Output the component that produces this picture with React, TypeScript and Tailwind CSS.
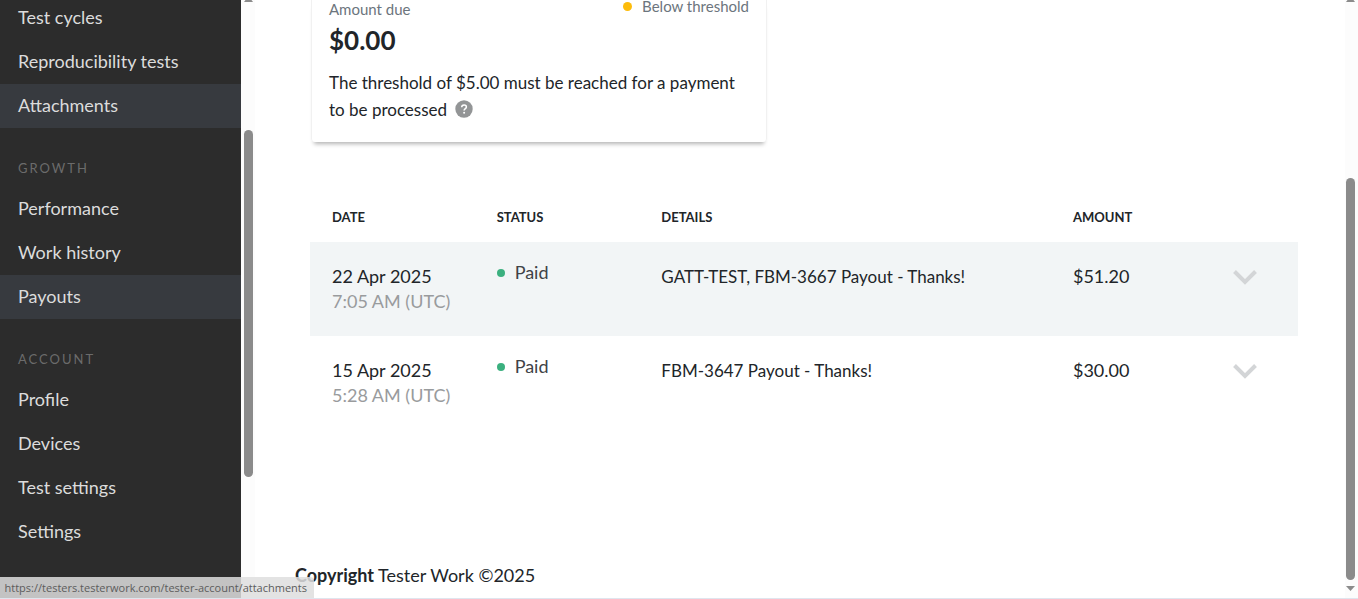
import React, { useState } from 'react';
import clsx from 'clsx';

interface NavItem {
  label: string;
  href: string;
  highlighted?: boolean;
}

interface NavGroup {
  title?: string;
  items: NavItem[];
}

interface Payout {
  id: string;
  date: string;
  time: string;
  status: string;
  details: string;
  amount: string;
}

const navGroups: NavGroup[] = [
  {
    items: [
      { label: 'Test cycles', href: '#test-cycles' },
      { label: 'Reproducibility tests', href: '#reproducibility-tests' },
      { label: 'Attachments', href: '#attachments', highlighted: true },
    ],
  },
  {
    title: 'Growth',
    items: [
      { label: 'Performance', href: '#performance' },
      { label: 'Work history', href: '#work-history' },
      { label: 'Payouts', href: '#payouts', highlighted: true },
    ],
  },
  {
    title: 'Account',
    items: [
      { label: 'Profile', href: '#profile' },
      { label: 'Devices', href: '#devices' },
      { label: 'Test settings', href: '#test-settings' },
      { label: 'Settings', href: '#settings' },
    ],
  },
];

const payouts: Payout[] = [
  { id: 'p1', date: '22 Apr 2025', time: '7:05 AM (UTC)', status: 'Paid', details: 'GATT-TEST, FBM-3667 Payout - Thanks!', amount: '$51.20' },
  { id: 'p2', date: '15 Apr 2025', time: '5:28 AM (UTC)', status: 'Paid', details: 'FBM-3647 Payout - Thanks!', amount: '$30.00' },
];

const Sidebar: React.FC = () => (
  <nav className="w-[241px] shrink-0 overflow-hidden bg-[#2c2c2c]">
    <div className="-mt-1">
      {navGroups.map((group, i) => (
        <div key={i}>
          {group.title && (
            <h2 className="flex h-[59px] items-center pt-5 pl-[18px] text-[13px] leading-5 tracking-[2px] text-[#6b6b6b] uppercase">
              {group.title}
            </h2>
          )}
          <ul>
            {group.items.map((item) => (
              <li key={item.label}>
                <a
                  href={item.href}
                  className={clsx('flex h-11 items-center px-[18px] pb-[2px] text-[18px] text-[#dcdcdc]', item.highlighted && 'bg-[#373a3f]')}
                >
                  {item.label}
                </a>
              </li>
            ))}
          </ul>
        </div>
      ))}
    </div>
  </nav>
);

const BalanceCard: React.FC = () => (
  <section className="ml-4 w-[456px] rounded-b border-x border-[#f1f1f1] px-[17px] pb-[19px] shadow-[0_5px_4px_-3px_rgba(0,0,0,0.3)]">
    <div className="flex items-start justify-between text-[15px] leading-[18px] text-[#6c757d]">
      <span>Amount due</span>
      <span className="-mt-[3px] flex items-center gap-[10px]">
        <span className="size-[9px] rounded-full bg-[#fdbc0b]" />
        Below threshold
      </span>
    </div>
    <p className="pt-[5px] text-[26px] leading-[34px] font-bold">$0.00</p>
    <p className="pt-3 text-[17px] leading-[27px]">
      The threshold of $5.00 must be reached for a payment to be processed{' '}
      <button type="button" aria-label="About the payment threshold" className="ml-1 inline-flex align-text-bottom">
        <svg width="18" height="20" viewBox="0 0 18 20" fill="none">
          <circle cx="9" cy="9" r="8.700" fill="#939596" />
          <path d="M6.700 7.200c0-1.500 1-2.300 2.400-2.300s2.300.8 2.300 2c0 1.700-2.300 1.800-2.300 3.700" stroke="#fff" strokeWidth="1.500" />
          <circle cx="9.100" cy="12.700" r="1" fill="#fff" />
        </svg>
      </button>
    </p>
  </section>
);

const PayoutTable: React.FC = () => {
  const [openId, setOpenId] = useState<string | null>(null);

  return (
    <table className="mt-[52px] w-full table-fixed text-left">
      <thead>
        <tr className="h-12 text-[13px] leading-5 uppercase">
          <th className="w-2/12 pb-[2px] pl-[22px] font-bold">Date</th>
          <th className="w-2/12 pb-[2px] pl-[22px] font-bold">Status</th>
          <th className="w-5/12 pb-[2px] pl-[22px] font-bold">Details</th>
          <th className="w-2/12 pb-[2px] pl-[22px] font-bold">Amount</th>
          <th className="w-1/12" aria-label="Expand" />
        </tr>
      </thead>
      <tbody className="text-[18px] leading-[25px]">
        {payouts.map((p) => (
          <tr key={p.id} className="h-[94px] align-top odd:bg-[#f2f5f6]">
            <td className="pt-[22px] pl-[22px]">
              {p.date}
              <div className="text-[#999b9d]">{p.time}</div>
            </td>
            <td className="pt-[18px] pl-[22px]">
              <span className="flex items-center gap-[10px] text-[#3f4347]">
                <span className="size-2 rounded-full bg-[#3bb07f]" />
                {p.status}
              </span>
            </td>
            <td className="pt-[22px] pl-[22px] text-[17px]">{p.details}</td>
            <td className="pt-[22px] pl-[22px]">{p.amount}</td>
            <td className="pt-[22px] pl-[17px]">
              <button
                type="button"
                aria-label="Toggle details"
                aria-expanded={openId === p.id}
                onClick={() => setOpenId(openId === p.id ? null : p.id)}
                className="flex h-[26px] items-center"
              >
                <svg width="24" height="15" viewBox="0 0 24 15" fill="none" stroke="#d3d5d7" strokeWidth="4">
                  <path d="M1.5 1.5 12 12 22.500 1.5" />
                </svg>
              </button>
            </td>
          </tr>
        ))}
      </tbody>
    </table>
  );
};

const App: React.FC = () => (
  <div className="relative flex min-h-screen flex-col overflow-hidden bg-white font-['Lato',sans-serif] text-[#212529]">
    <div className="flex flex-1">
      <Sidebar />

      {/* sidebar scroll track */}
      <div className="flex w-[14px] shrink-0 flex-col bg-[#fcfcfc] pl-[3px]">
        <svg width="9" height="2" className="shrink-0" fill="#8b8b8b">
          <path d="M1.500 0h6l1.500 2H0z" />
        </svg>
        <div className="mt-32 h-[347px] w-[9px] rounded-full bg-[#8b8b8b]" />
      </div>

      <div className="flex min-w-0 flex-1 flex-col pr-[47px] pl-10">
        <main className="flex-1">
          <BalanceCard />
          <div className="ml-[15px]">
            <PayoutTable />
          </div>
        </main>
        <footer className="pb-[9px] text-[18px] leading-[27px]">
          <strong>Copyright</strong> Tester Work ©2025
        </footer>
      </div>

      {/* page scroll track */}
      <div className="flex w-[13px] shrink-0 flex-col items-center bg-[#fcfcfc] pr-[2px] pb-[7px]">
        <svg width="9" height="2" className="shrink-0" fill="#8b8b8b">
          <path d="M1.500 0h6l1.500 2H0z" />
        </svg>
        <div className="mt-44 w-[9px] flex-1 rounded-full bg-[#8b8b8b]" />
        <svg width="9" height="5" className="mt-[6px] shrink-0" fill="#8b8b8b">
          <path d="M0 0h9L4.500 5z" />
        </svg>
      </div>
    </div>
    <div className="h-px bg-[#dfe5ee]" />

    {/* link target preview */}
    <div className="absolute bottom-px left-0 flex h-[21px] w-[314px] justify-end rounded-tr-sm bg-[#dedede]/85 pr-[7px] font-['Open_Sans',sans-serif] text-[11px] leading-[21px] whitespace-nowrap text-[#5c5c5c]">
      https://testers.testerwork.com/tester-account/attachments
    </div>
  </div>
);

export default App;
